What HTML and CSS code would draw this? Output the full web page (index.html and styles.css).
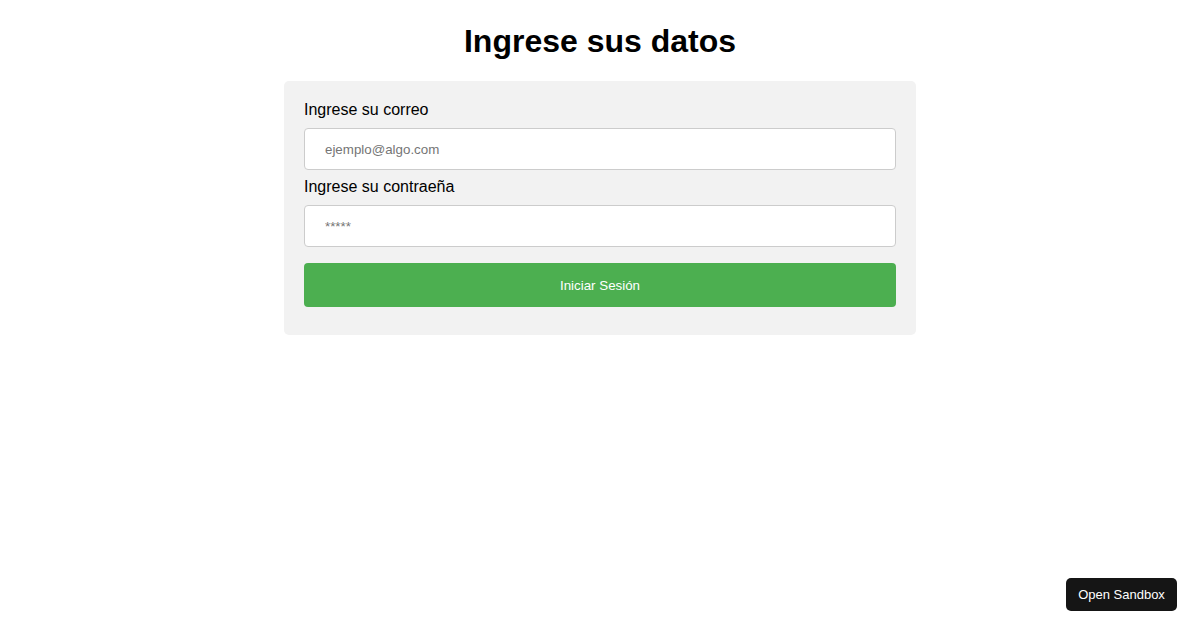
FILE: index.html
```html
<!DOCTYPE html>
<html lang="es">
<head>
<meta charset="utf-8">
<title>Ingrese sus datos</title>
<link rel="stylesheet" href="styles.css">
</head>
<body>
  <h1 class="title">Ingrese sus datos</h1>
  <form class="card">
    <label class="label" for="email">Ingrese su correo</label>
    <input class="field" id="email" type="text" placeholder="ejemplo@algo.com">
    <label class="label" for="pass">Ingrese su contraeña</label>
    <input class="field" id="pass" type="password" placeholder="*****">
    <button class="submit" type="button">Iniciar Sesión</button>
  </form>
  <a class="sandbox" href="#">Open Sandbox</a>
</body>
</html>
```

FILE: styles.css
```css
html, body {
  background: #ffffff;
}
body {
  margin: 0 8px 8px;
  padding-top: 1px;
  font-family: "Liberation Sans", Arial, sans-serif;
  color: #000;
}
.title {
  font-size: 32px;
  font-weight: bold;
  text-align: center;
  margin: 21.5px 0 21.5px;
  line-height: 37px;
}
.card {
  box-sizing: border-box;
  width: 632px;
  margin: 0 auto;
  padding: 20px 20px 20px;
  background: #f2f2f2;
  border-radius: 5px;
  display: flex;
  flex-direction: column;
}
.label {
  font-size: 16px;
  line-height: 18.4px;
}
.field {
  box-sizing: border-box;
  width: 100%;
  height: 42px;
  margin: 8.6px 0 8px;
  padding: 0 20px;
  border: 1px solid #ccc;
  border-radius: 4px;
  background: #fff;
  font-family: "Liberation Sans", Arial, sans-serif;
  font-size: 13.333px;
  color: #000;
  outline: none;
}
.field::placeholder {
  color: #757575;
}
.submit {
  box-sizing: border-box;
  width: 100%;
  height: 44px;
  margin: 8px 0 8px;
  border: none;
  border-radius: 4px;
  background: #4caf50;
  color: #fff;
  font-family: "Liberation Sans", Arial, sans-serif;
  font-size: 13.333px;
  cursor: pointer;
}
.sandbox {
  position: fixed;
  right: 23px;
  bottom: 19px;
  width: 111px;
  height: 33px;
  box-sizing: border-box;
  display: flex;
  align-items: center;
  justify-content: center;
  background: #151515;
  border-radius: 5px;
  color: #fff;
  font-family: "Liberation Sans", Arial, sans-serif;
  font-size: 13px;
  text-decoration: none;
}
```
